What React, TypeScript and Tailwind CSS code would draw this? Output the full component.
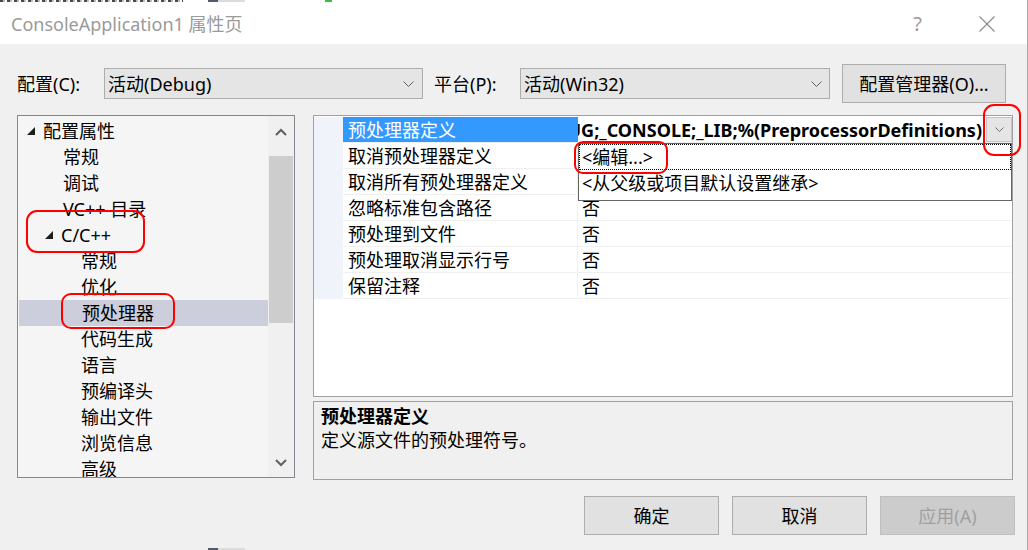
import React from "react";

const Chevron = ({ w = 11, h = 6, color = "#606060", sw = 1 }: { w?: number; h?: number; color?: string; sw?: number }) => (
  <svg width={w} height={h} viewBox={`0 0 ${w} ${h}`} className="shrink-0">
    <path d={`M0.5 0.5 L${w / 2} ${h - 0.5} L${w - 0.5} 0.5`} fill="none" stroke={color} strokeWidth={sw} />
  </svg>
);

const Tri = () => (
  <svg width="8" height="8" viewBox="0 0 8 8" className="shrink-0">
    <path d="M8 0 L8 8 L0 8 Z" fill="#1e1e1e" />
  </svg>
);

type TreeItem = { text: string; pl: string; tri?: boolean; sel?: boolean };

const tree: TreeItem[] = [
  { text: "配置属性", pl: "pl-[9px]", tri: true },
  { text: "常规", pl: "pl-[45px]" },
  { text: "调试", pl: "pl-[45px]" },
  { text: "VC++ 目录", pl: "pl-[45px]" },
  { text: "C/C++", pl: "pl-[27px]", tri: true },
  { text: "常规", pl: "pl-[63px]" },
  { text: "优化", pl: "pl-[63px]" },
  { text: "预处理器", pl: "pl-[63px]", sel: true },
  { text: "代码生成", pl: "pl-[63px]" },
  { text: "语言", pl: "pl-[63px]" },
  { text: "预编译头", pl: "pl-[63px]" },
  { text: "输出文件", pl: "pl-[63px]" },
  { text: "浏览信息", pl: "pl-[63px]" },
  { text: "高级", pl: "pl-[63px]" },
];

const rows: { name: string; value: string }[] = [
  { name: "取消预处理器定义", value: "" },
  { name: "取消所有预处理器定义", value: "" },
  { name: "忽略标准包含路径", value: "否" },
  { name: "预处理到文件", value: "否" },
  { name: "预处理取消显示行号", value: "否" },
  { name: "保留注释", value: "否" },
];

export default function App() {
  return (
    <div className="relative w-[1028px] h-[550px] overflow-hidden bg-[#f0f0f0] border-r border-[#a8a8a8] font-['Noto_Sans','Noto_Sans_CJK_SC',sans-serif] text-[18px] text-black">
      {/* top strip (other windows) */}
      <div className="h-[3px] bg-white" />
      {/* title bar */}
      <div className="h-[41px] bg-white flex items-center pl-[11px] pr-[32px]">
        <span className="text-[#9a9a9a] leading-none">ConsoleApplication1 属性页</span>
        <div className="ml-auto flex items-center">
          <span className="text-[#9a9a9a] text-[20px] leading-none mr-[57px]">?</span>
          <svg width="16" height="16" viewBox="0 0 16 16">
            <path d="M0.5 0.5 L15.5 15.5 M15.5 0.5 L0.5 15.5" stroke="#8a8a8a" strokeWidth="1.1" />
          </svg>
        </div>
      </div>

      <div className="pl-[17px] pr-[14px]">
        {/* config row */}
        <div className="mt-[20px] h-[39px] flex items-center">
          <span className="w-[87px] leading-none">配置(C):</span>
          <div className="w-[319px] h-[31px] bg-[#e5e5e5] border border-[#adadad] flex items-center pl-[3px] pr-[8px]">
            <span className="flex-1 leading-none">活动(Debug)</span>
            <Chevron />
          </div>
          <span className="ml-[11px] w-[86px] leading-none">平台(P):</span>
          <div className="w-[310px] h-[31px] bg-[#e5e5e5] border border-[#adadad] flex items-center pl-[3px] pr-[7px]">
            <span className="flex-1 leading-none">活动(Win32)</span>
            <Chevron />
          </div>
          <div className="ml-[12px] w-[164px] h-[39px] bg-[#e1e1e1] border border-[#adadad] flex items-center justify-center leading-none">
            配置管理器(O)...
          </div>
        </div>

        {/* main area */}
        <div className="mt-[12px] flex gap-[18px]">
          {/* tree */}
          <div className="w-[278px] h-[363px] shrink-0 border border-[#828790] bg-[#f5f5f5] flex">
            <div className="flex-1 pt-[2px] overflow-hidden">
              {tree.map((t, i) => (
                <div
                  key={i}
                  className={`h-[26px] flex items-center gap-[8px] leading-none ${t.pl} ${t.sel ? "bg-[#cccedb] ml-[1px]" : ""}`}
                >
                  {t.tri && <Tri />}
                  <span>{t.text}</span>
                </div>
              ))}
            </div>
            <div className="w-[26px] shrink-0 bg-[#f0f0f0] flex flex-col">
              <div className="h-[32px] flex items-center justify-center">
                <svg width="12" height="8" viewBox="0 0 12 8">
                  <path d="M1 7 L6 2 L11 7" fill="none" stroke="#606060" strokeWidth="2" />
                </svg>
              </div>
              <div className="mt-[8px] mx-[1px] h-[167px] bg-[#cdcdcd]" />
              <div className="flex-1" />
              <div className="h-[28px] flex items-center justify-center">
                <svg width="12" height="8" viewBox="0 0 12 8">
                  <path d="M1 1 L6 6 L11 1" fill="none" stroke="#606060" strokeWidth="2" />
                </svg>
              </div>
            </div>
          </div>

          {/* right column */}
          <div className="w-[700px] shrink-0 flex flex-col">
            <div className="relative h-[282px] border border-[#a0a0a0] bg-white pt-[1px]">
              {/* row 1 (selected) */}
              <div className="flex h-[26px]">
                <div className="w-[29px] shrink-0 bg-[#f0f4fa]" />
                <div className="flex-1 min-w-0 flex border-b border-[#f0f0f0]">
                  <div className="w-[235px] shrink-0 bg-[#3399ff] text-white flex items-center pl-[5px] leading-none">预处理器定义</div>
                  <div className="flex-1 min-w-0 flex items-center">
                    <div className="flex-1 min-w-0 h-full flex items-center justify-end overflow-hidden whitespace-nowrap font-bold pr-[4px]">
                      <span className="shrink-0 leading-[20px]">WIN32;_DEBUG;_CONSOLE;_LIB;%(PreprocessorDefinitions)</span>
                    </div>
                    <div className="w-[26px] h-[25px] shrink-0 bg-[#e5e5e5] border border-[#c4c4c4] flex items-center justify-center self-start">
                      <Chevron w={9} h={5} color="#707070" />
                    </div>
                  </div>
                </div>
              </div>
              {rows.map((r, i) => (
                <div key={i} className="flex h-[26px]">
                  <div className="w-[29px] shrink-0 bg-[#f0f4fa]" />
                  <div className="flex-1 min-w-0 flex border-b border-[#f0f0f0]">
                    <div className="w-[235px] shrink-0 border-r border-[#f0f0f0] flex items-center pl-[5px] leading-none">{r.name}</div>
                    <div className="flex-1 flex items-center pl-[4px] leading-none">{r.value}</div>
                  </div>
                </div>
              ))}
              {/* dropdown list */}
              <div className="absolute left-[264px] top-[27px] w-[434px] h-[58px] bg-white border border-[#646464]">
                <div className="h-[26px] flex items-center pl-[3px] leading-none outline outline-1 outline-dotted outline-black -outline-offset-1">
                  &lt;编辑...&gt;
                </div>
                <div className="h-[26px] flex items-center pl-[3px] leading-none">&lt;从父级或项目默认设置继承&gt;</div>
              </div>
            </div>
            <div className="mt-[4px] h-[79px] border border-[#a0a0a0] bg-[#f0f0f0] pl-[7px] pt-[2px]">
              <div className="h-[24px] flex items-center font-bold leading-none">预处理器定义</div>
              <div className="h-[24px] flex items-center leading-none">定义源文件的预处理符号。</div>
            </div>
          </div>
        </div>

        {/* buttons */}
        <div className="mt-[16px] flex justify-end gap-[13px] -mr-[2px]">
          <div className="w-[135px] h-[39px] bg-[#e1e1e1] border border-[#adadad] flex items-center justify-center leading-none">确定</div>
          <div className="w-[135px] h-[39px] bg-[#e1e1e1] border border-[#adadad] flex items-center justify-center leading-none">取消</div>
          <div className="w-[135px] h-[39px] bg-[#cccccc] border border-[#bfbfbf] flex items-center justify-center leading-none text-[#a0a0a0]">应用(A)</div>
        </div>
      </div>

      {/* fragments of other windows */}
      <div className="absolute left-0 top-0 w-[183px] h-[2px] bg-[repeating-linear-gradient(90deg,#4a4a4a_0_3px,#bdbdbd_3px_5px,#ffffff_5px_7px)]" />
      <div className="absolute left-[208px] top-0 w-[10px] h-[2px] bg-[#505a6a]" />
      <div className="absolute left-[218px] top-0 w-[27px] h-[2px] bg-[#dcdcdc]" />
      <div className="absolute left-[325px] top-0 w-[7px] h-[2px] bg-[#34c040]" />
      <div className="absolute left-[208px] top-[548px] w-[10px] h-[2px] bg-[#505a6a]" />
      <div className="absolute left-[218px] top-[548px] w-[27px] h-[2px] bg-[#dcdcdc]" />

      {/* red annotations */}
      <div className="absolute left-[26px] top-[210px] w-[119px] h-[43px] border-2 border-[#ff0000] rounded-[11px]" />
      <div className="absolute left-[61px] top-[293px] w-[114px] h-[36px] border-2 border-[#ff0000] rounded-[10px]" />
      <div className="absolute left-[574px] top-[141px] w-[94px] h-[33px] border-2 border-[#ff0000] rounded-[9px]" />
      <div className="absolute left-[983px] top-[104px] w-[38px] h-[52px] border-2 border-[#ff0000] rounded-[11px]" />
    </div>
  );
}
